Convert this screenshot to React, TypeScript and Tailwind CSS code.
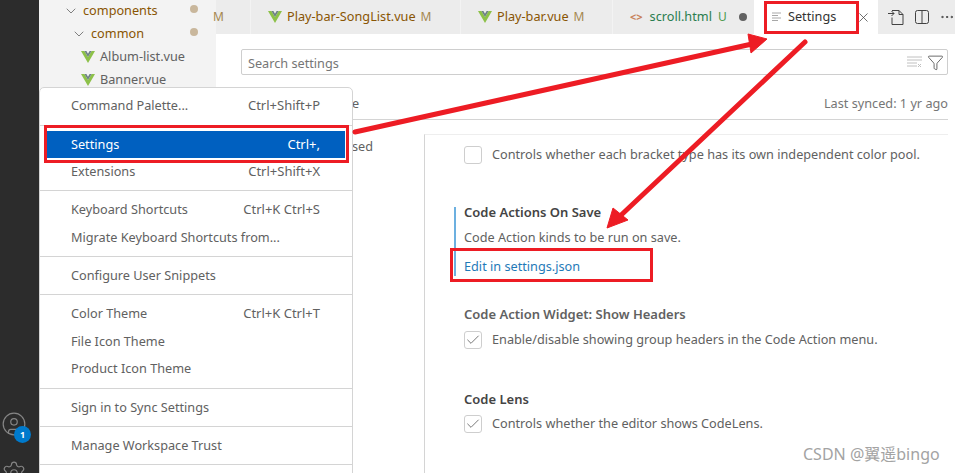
import { Check, ChevronDown, CircleUser, Ellipsis, Filter, Settings, X } from 'lucide-react';

const font = "font-['Noto_Sans','Noto_Sans_CJK_SC',sans-serif]";

function VueIcon() {
  return (
    <svg width="14" height="12" viewBox="0 0 14 12" className="shrink-0">
      <path d="M0 0h3.4L7 6l3.6-6H14L7 12z" fill="#8dc149" />
      <path d="M3.4 0h2L7 2.8 8.6 0h2L7 6z" fill="#6d8086" />
    </svg>
  );
}

function TreeRow({ label, indent, open, dot, brown }: { label: string; indent: string; open?: boolean; dot?: boolean; brown?: boolean }) {
  return (
    <div className={`h-[23px] flex items-center ${indent} relative`}>
      {open ? <ChevronDown className="w-4 h-4 text-[#616161] mr-[4px]" strokeWidth={1.2} /> : <span className="mr-[5px]"><VueIcon /></span>}
      <span className={brown ? 'text-[#895503]' : 'text-[#616161]'}>{label}</span>
      {dot && <span className="absolute left-[151px] top-[6px] w-[8px] h-[8px] rounded-full bg-[#c9b79c]" />}
    </div>
  );
}

function Tab({ name, mark, width }: { name: string; mark: string; width: string }) {
  return (
    <div className={`${width} h-full flex items-center pl-[17px] border-r border-[#f3f3f3] shrink-0`}>
      <VueIcon />
      <span className="ml-[5px] text-[#895503]">{name}</span>
      <span className="ml-[5px] text-[#a5874f] text-[12px]">{mark}</span>
    </div>
  );
}

function CheckBox({ checked }: { checked?: boolean }) {
  return (
    <div className="w-[18px] h-[18px] border border-[#cecece] rounded-[3px] flex items-center justify-center shrink-0">
      {checked && <Check className="w-4 h-4 text-[#616161]" strokeWidth={1.3} />}
    </div>
  );
}

function MenuGroup({ items, first }: { items: [string, string?, boolean?][]; first?: boolean }) {
  return (
    <div className={`${first ? 'pt-[4px] pb-[5px]' : 'pt-[5px] pb-[4.750px]'} border-b border-[#d4d4d4]`}>
      {items.map(([label, keys, active]) => (
        <div
          key={label}
          className={`h-[27.5px] mx-[7px] pl-[24px] pr-[25px] flex items-center justify-between ${active ? 'bg-[#0060c0] text-white' : 'text-[#616161]'}`}
        >
          <span className="text-[12.700px]">{label}</span>
          {keys && <span>{keys}</span>}
        </div>
      ))}
    </div>
  );
}

export default function App() {
  return (
    <div className={`${font} relative w-[955px] h-[473px] overflow-hidden bg-white text-[12.700px] flex`}>
      {/* activity bar */}
      <div className="w-[39px] h-full bg-[#2c2c2c] shrink-0 relative">
        <CircleUser className="absolute left-[1px] top-[411px] w-[26px] h-[26px] text-[#858585]" strokeWidth={1.1} />
        <span className="absolute left-[14px] top-[426px] w-[17px] h-[17px] rounded-full bg-[#007acc] text-white text-[9px] font-bold flex items-center justify-center">1</span>
        <Settings className="absolute left-[1px] top-[460px] w-[26px] h-[26px] text-[#858585]" strokeWidth={1.1} />
      </div>

      {/* explorer */}
      <div className="w-[177px] h-full bg-[#f3f3f3] shrink-0 -mt-[1px]">
        <TreeRow label="components" indent="pl-[24px]" open dot brown />
        <TreeRow label="common" indent="pl-[32px]" open dot brown />
        <TreeRow label="Album-list.vue" indent="pl-[42px]" />
        <TreeRow label="Banner.vue" indent="pl-[42px]" />
      </div>

      {/* editor */}
      <div className="flex-1 min-w-0 flex flex-col">
        <div className="h-[34px] bg-[#ececec] flex items-center shrink-0">
          <div className="w-[37px] h-full border-r border-[#f3f3f3] flex items-center text-[#a5874f] text-[12px]">
            <span className="-ml-[3px]">M</span>
          </div>
          <Tab name="Play-bar-SongList.vue" mark="M" width="w-[210px]" />
          <Tab name="Play-bar.vue" mark="M" width="w-[152px]" />
          <div className="w-[141px] h-full flex items-center pl-[17px] shrink-0">
            <span className="text-[#c8825a] text-[11px] font-bold">&lt;&gt;</span>
            <span className="ml-[7px] text-[#2a7d4f]">scroll.html</span>
            <span className="ml-[6px] text-[#4d9a4d] text-[12px]">U</span>
            <span className="ml-[12px] w-[8px] h-[8px] rounded-full bg-[#616161]" />
          </div>
          <div className="w-[124px] h-full bg-white flex items-center pl-[18px] shrink-0">
            <svg width="10" height="11" viewBox="0 0 10 11" stroke="#a8a8a8" strokeWidth="1">
              <path d="M0 1h9M0 3.5h6M0 6h9M0 8.500h6" />
            </svg>
            <span className="ml-[6px] text-[#333]">Settings</span>
            <X className="ml-[20px] w-[15px] h-[15px] text-[#424242]" strokeWidth={1.2} />
          </div>
          <div className="flex-1 flex items-center pl-[9px] gap-[9px] text-[#424242]">
            <svg width="18" height="18" viewBox="0 0 18 18" fill="none" stroke="#424242" strokeWidth="1">
              <path d="M5 2.500h7l4 4v10H5v-7M12 2.500v4h4M1 5.500h6M4.500 3l2.500 2.500L4.500 8" />
            </svg>
            <svg width="16" height="16" viewBox="0 0 16 16" fill="none" stroke="#424242" strokeWidth="1">
              <rect x="1.500" y="1.500" width="13" height="13" rx="2" />
              <path d="M8 1.500v13" />
            </svg>
            <Ellipsis className="w-4 h-4" strokeWidth={1.5} />
          </div>
        </div>

        <div className="flex-1 min-h-0 pr-[7px] pt-[15px] pl-[25px] flex flex-col">
          <div className="h-[26px] border border-[#cecece] rounded-[2px] flex items-center justify-between pl-[6px] pr-[3px] text-[#767676] shrink-0">
            <span className="relative top-[2px]">Search settings</span>
            <span className="flex items-center gap-[5px]">
              <svg width="15" height="12" viewBox="0 0 15 12" stroke="#c0c0c0" strokeWidth="1" fill="none">
                <path d="M0 1h15M0 4h15M0 7h10M0 10h10M11 8l3 3M14 8l-3 3" />
              </svg>
              <Filter className="w-[17px] h-[17px] text-[#424242]" strokeWidth={1.1} />
            </span>
          </div>

          <div className="h-[45px] flex items-end justify-between pb-[6px] pl-[111px] text-[#767676] border-b border-[#d4d4d4] shrink-0">
            <span className="text-[#616161]">e</span>
            <span>Last synced: 1 yr ago</span>
          </div>

          <div className="flex-1 min-h-0 flex">
            <div className="w-[183px] shrink-0 pl-[111px] pt-[17px] text-[#616161]">sed</div>
            <div className="flex-1 mt-[14px] border-l border-t border-[#eeeeee] border-l-[#d4d4d4] pl-[39px] pt-[10px]">
              <div className="flex items-center gap-[10px]">
                <CheckBox />
                <span className="text-[#616161]">Controls whether each bracket type has its own independent color pool.</span>
              </div>

              <div className="mt-[43px] -ml-[10px] pl-[8px] border-l-2 border-[#6cb0e0] h-[69px] flex flex-col">
                <div className="h-[12px] shrink-0 flex items-center font-semibold text-[#444] text-[13px]">Code Actions On Save</div>
                <div className="h-[36px] shrink-0 flex items-center text-[#616161]">Code Action kinds to be run on save.</div>
                <div className="h-[23px] shrink-0 flex items-center text-[#1f7ab8]">Edit in settings.json</div>
              </div>

              <div className="mt-[29px] font-semibold text-[#616161] text-[13px] h-[20px] flex items-center">Code Action Widget: Show Headers</div>
              <div className="mt-[5px] flex items-center gap-[10px]">
                <CheckBox checked />
                <span className="text-[#616161]">Enable/disable showing group headers in the Code Action menu.</span>
              </div>

              <div className="mt-[41px] font-semibold text-[#444] text-[13px] h-[20px] flex items-center">Code Lens</div>
              <div className="mt-[4px] flex items-center gap-[10px]">
                <CheckBox checked />
                <span className="text-[#616161]">Controls whether the editor shows CodeLens.</span>
              </div>
            </div>
          </div>
        </div>
      </div>

      {/* menu popup */}
      <div className="absolute left-[39px] top-[87px] w-[314px] h-[395px] bg-white border border-[#d4d4d4] rounded-[5px] text-[13px]">
        <MenuGroup first items={[['Command Palette...', 'Ctrl+Shift+P']]} />
        <MenuGroup items={[['Settings', 'Ctrl+,', true], ['Extensions', 'Ctrl+Shift+X']]} />
        <MenuGroup items={[['Keyboard Shortcuts', 'Ctrl+K Ctrl+S'], ['Migrate Keyboard Shortcuts from...']]} />
        <MenuGroup items={[['Configure User Snippets']]} />
        <MenuGroup items={[['Color Theme', 'Ctrl+K Ctrl+T'], ['File Icon Theme'], ['Product Icon Theme']]} />
        <MenuGroup items={[['Sign in to Sync Settings']]} />
        <MenuGroup items={[['Manage Workspace Trust']]} />
      </div>

      {/* annotations */}
      <div className="absolute left-[44px] top-[125px] w-[305px] h-[38px] border-[3px] border-[#ed1c24]" />
      <div className="absolute left-[764px] top-[1px] w-[95px] h-[33px] border-[3px] border-[#ed1c24]" />
      <div className="absolute left-[450px] top-[248px] w-[203px] h-[34px] border-[3px] border-[#ed1c24]" />
      <svg className="absolute left-0 top-0" width="955" height="473" viewBox="0 0 955 473" fill="#ed1c24" stroke="#ed1c24">
        <path d="M355 132L752 44" strokeWidth="5" strokeLinecap="round" fill="none" />
        <path d="M767 39L748 34L751 53z" />
        <path d="M805 42L618 218" strokeWidth="5" strokeLinecap="round" fill="none" />
        <path d="M607 228L613 208L628 220z" />
      </svg>
      <span className="absolute left-[803px] top-[444px] text-[16px] leading-[20px] text-[#a3a3a3]">CSDN @翼遥bingo</span>
    </div>
  );
}
